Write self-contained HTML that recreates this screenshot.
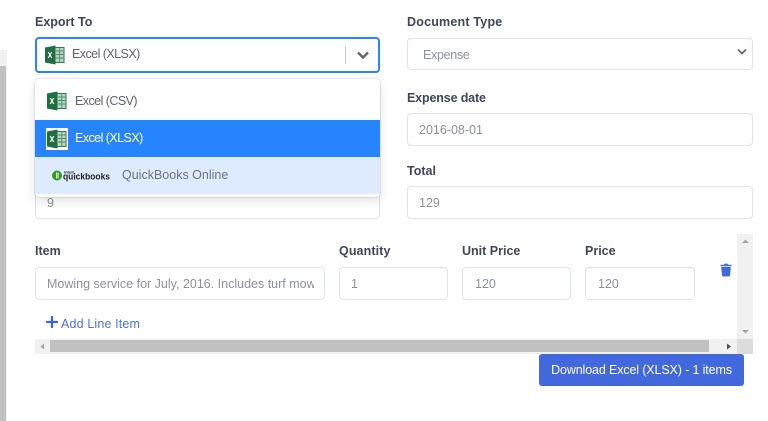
<!DOCTYPE html>
<html><head><meta charset="utf-8">
<style>
html,body{margin:0;padding:0;background:#fff;}
body{width:768px;height:421px;overflow:hidden;position:relative;font-family:"Liberation Sans",sans-serif;font-size:12.5px;color:#6e707e;}
.a{position:absolute;box-sizing:border-box;white-space:nowrap;}
.l{font-weight:bold;color:#3f4658;font-size:12.5px;line-height:16px;}
.i{border:1px solid #dfe2ea;border-radius:4px;background:#fff;color:#8d8f9d;line-height:33px;padding-left:11px;overflow:hidden;}
.x{letter-spacing:-.55px;}
</style></head><body>

<!-- left scrollbar -->
<div class="a" style="left:0;top:50px;width:7px;height:371px;background:#f1f1f1"></div>
<div class="a" style="left:0;top:66px;width:6px;height:355px;background:#c1c1c1"></div>

<div class="a l" style="left:35px;top:14px">Export To</div>
<div class="a" style="left:35px;top:37px;width:345px;height:36px;border:2px solid #2684ff;border-radius:4px;background:#fff"></div>
<svg class="a" style="left:44px;top:45px" width="21" height="20" viewBox="0 0 21 20"><use href="#xl"/></svg>
<div class="a x" style="left:72px;top:46px;line-height:16px;color:#5f6270">Excel (XLSX)</div>
<div class="a" style="left:345px;top:46px;width:1px;height:18px;background:#ccc"></div>
<svg class="a" style="left:356px;top:50px" width="14" height="10" viewBox="0 0 14 10"><path d="M2 2.5 L7 7.5 L12 2.5" fill="none" stroke="#666" stroke-width="2.4"/></svg>

<div class="a l" style="left:407px;top:14px;letter-spacing:.2px">Document Type</div>
<div class="a i" style="left:407px;top:38px;width:346px;height:32px;padding-left:15px;letter-spacing:-.3px;line-height:32px">Expense</div>
<svg class="a" style="left:737px;top:48px" width="10" height="8" viewBox="0 0 10 8"><path d="M1 1.5 L5 5.5 L9 1.5" fill="none" stroke="#666" stroke-width="1.7"/></svg>

<div class="a l" style="left:407px;top:90px;letter-spacing:-.15px">Expense date</div>
<div class="a i" style="left:407px;top:113px;width:346px;height:33px">2016-08-01</div>
<div class="a l" style="left:407px;top:163px">Total</div>
<div class="a i" style="left:407px;top:186px;width:346px;height:33px">129</div>

<div class="a i" style="left:35px;top:186px;width:345px;height:33px">9</div>

<!-- dropdown -->
<div class="a" style="left:35px;top:79px;width:345px;height:118px;background:#fff;border-radius:4px;box-shadow:0 0 0 1px rgba(0,0,0,.08),0 4px 11px rgba(0,0,0,.12);overflow:hidden">
  <div class="a" style="left:0;top:41px;width:345px;height:37px;background:#2684ff"></div>
  <div class="a" style="left:0;top:78px;width:345px;height:37px;background:#deebff"></div>
</div>
<svg class="a" style="left:46px;top:91px" width="21" height="20" viewBox="0 0 21 20"><use href="#xl"/></svg>
<div class="a x" style="left:75px;top:93px;line-height:16px;color:#5f6270">Excel (CSV)</div>
<div class="a" style="left:46px;top:128px;width:22px;height:22px;background:#fff"></div>
<svg class="a" style="left:46px;top:129px" width="21" height="20" viewBox="0 0 21 20"><use href="#xl"/></svg>
<div class="a x" style="left:75px;top:130px;line-height:16px;color:#fff">Excel (XLSX)</div>
<svg class="a" style="left:51px;top:169px" width="60" height="14" viewBox="0 0 60 14">
  <circle cx="6" cy="6.5" r="5" fill="#2ca01c"/>
  <path d="M5.5 3.5v6M7 3.5v6" stroke="#fff" stroke-width="1" fill="none"/>
  <text x="13" y="4.5" font-family="Liberation Sans" font-size="4" font-weight="bold" fill="#222">intuit</text>
  <text x="12" y="10.5" font-family="Liberation Sans" font-size="8.8" font-weight="bold" fill="#222" textLength="47" lengthAdjust="spacingAndGlyphs">quickbooks</text>
</svg>
<div class="a" style="left:122px;top:167px;line-height:16px;color:#6e7280">QuickBooks Online</div>

<!-- line items -->
<div class="a l" style="left:35px;top:243px">Item</div>
<div class="a l" style="left:339px;top:243px;letter-spacing:.1px">Quantity</div>
<div class="a l" style="left:462px;top:243px">Unit Price</div>
<div class="a l" style="left:585px;top:243px">Price</div>
<div class="a i" style="left:35px;top:267px;width:290px;height:33px"><div style="width:267px;overflow:hidden">Mowing service for July, 2016. Includes turf mowing</div></div>
<div class="a i" style="left:339px;top:267px;width:109px;height:33px">1</div>
<div class="a i" style="left:462px;top:267px;width:109px;height:33px;padding-left:12px">120</div>
<div class="a i" style="left:585px;top:267px;width:110px;height:33px;padding-left:12px">120</div>
<svg class="a" style="left:720px;top:263px" width="12" height="14" viewBox="0 0 12 14"><path d="M0.5 1.8H4L4.5 .6H7.5L8 1.8H11.5V3.3H.5ZM1.2 4H10.8L10 12.6Q9.9 13.5 9 13.5H3Q2.1 13.5 2 12.6Z" fill="#4169dc"/></svg>
<svg class="a" style="left:46px;top:316px" width="12" height="12" viewBox="0 0 12 12"><path d="M6 1V11M1 6H11" stroke="#3f63d6" stroke-width="2.3" stroke-linecap="round"/></svg>
<div class="a" style="left:61px;top:316px;line-height:16px;color:#4e73df;letter-spacing:.15px">Add Line Item</div>

<!-- vertical scrollbar -->
<div class="a" style="left:737px;top:234px;width:16px;height:105px;background:#f1f1f1"></div>
<svg class="a" style="left:737px;top:234px" width="16" height="105"><path d="M5 9 L8.5 5.5 L12 9Z M5 96 L8.5 99.5 L12 96Z" fill="#a3a3a3"/></svg>
<!-- horizontal scrollbar -->
<div class="a" style="left:35px;top:339px;width:702px;height:15px;background:#f1f1f1"></div>
<div class="a" style="left:50px;top:340px;width:659px;height:12px;background:#c1c1c1"></div>
<svg class="a" style="left:35px;top:339px" width="702" height="15"><path d="M9 4.5 L5.5 7.5 L9 10.5Z" fill="#a3a3a3"/><path d="M692 4.5 L696 7.5 L692 10.5Z" fill="#505050"/></svg>
<div class="a" style="left:737px;top:339px;width:16px;height:15px;background:#dcdcdc"></div>

<!-- button -->
<div class="a" style="left:539px;top:354px;width:205px;height:32px;background:#4169dc;border-radius:3px;color:#fff;line-height:33px;text-align:center;font-size:12.5px;letter-spacing:-.13px">Download Excel (XLSX) - 1 items</div>

<svg width="0" height="0" style="position:absolute"><defs>
<g id="xl">
  <rect x="11" y="2.5" width="9" height="15" fill="#b9d4c3" stroke="#2a7a4e" stroke-width="1"/>
  <path d="M12 6H20M12 9.5H20M12 13H20M15.7 2.5V17.5" stroke="#4d8f6a" stroke-width=".9"/>
  <path d="M1 2.5 L11.5 .5 V19.5 L1 17.5Z" fill="#1d6f42"/>
  <path d="M4.2 7 L7.8 13 M7.8 7 L4.2 13" stroke="#fff" stroke-width="1.2" fill="none"/>
</g>
</defs></svg>
</body></html>
